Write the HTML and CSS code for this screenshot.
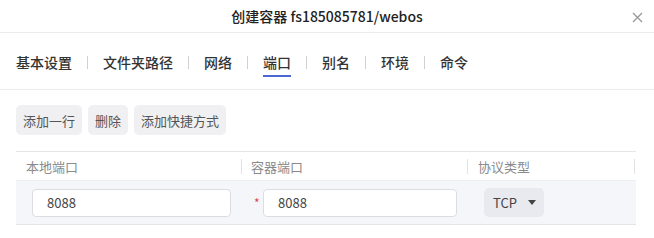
FILE: index.html
```html
<!DOCTYPE html>
<html lang="zh-CN">
<head>
    <meta charset="UTF-8">
    <title>创建容器</title>
    <link rel="stylesheet" href="styles.css">
</head>
<body>

<div class="dialog">
    <div class="dialog-header">
        <span></span>
        <h2 class="dialog-title">创建容器 fs185085781/webos</h2>
        <button class="close-btn" aria-label="关闭">
            <svg width="11" height="11" viewBox="0 0 11 11"><path d="M1 1L10 10M10 1L1 10" stroke="#9a9a9a" stroke-width="1.4" fill="none"/></svg>
        </button>
    </div>

    <div class="tabs">
        <span class="tab">基本设置</span>
        <span class="tab-sep"></span>
        <span class="tab">文件夹路径</span>
        <span class="tab-sep"></span>
        <span class="tab">网络</span>
        <span class="tab-sep"></span>
        <span class="tab active">端口</span>
        <span class="tab-sep"></span>
        <span class="tab">别名</span>
        <span class="tab-sep"></span>
        <span class="tab">环境</span>
        <span class="tab-sep"></span>
        <span class="tab">命令</span>
    </div>

    <div class="toolbar">
        <button class="btn">添加一行</button>
        <button class="btn">删除</button>
        <button class="btn">添加快捷方式</button>
    </div>

    <div class="port-table">
        <div class="table-head">
            <div class="th">本地端口</div>
            <div class="th">容器端口</div>
            <div class="th">协议类型</div>
        </div>
        <div class="table-row">
            <div class="td">
                <input class="field" type="text" value="8088">
            </div>
            <div class="td td-required">
                <span class="required">*</span>
                <input class="field" type="text" value="8088">
            </div>
            <div class="td">
                <div class="select">TCP <span class="caret"></span></div>
            </div>
        </div>
    </div>
</div>

</body>
</html>
```

FILE: styles.css
```css
body {
    margin: 0;
    font-family: "Noto Sans CJK SC", "Noto Sans", sans-serif;
    background: #fff;
    color: #333;
}
.dialog {
    width: 654px;
}
.dialog-header {
    display: grid;
    grid-template-columns: 1fr auto 1fr;
    align-items: center;
    height: 32px;
    border-bottom: 1px solid #ececec;
}
.dialog-title {
    margin: 0;
    font-size: 14px;
    font-weight: 500;
    color: #222;
    line-height: 30px;
}
.close-btn {
    justify-self: end;
    margin: 3px 11px 0 0;
    padding: 0;
    border: none;
    background: none;
    display: flex;
}
.tabs {
    display: flex;
    align-items: center;
    height: 57px;
    padding: 0 0 0 16px;
    border-bottom: 1px solid #ececec;
    box-sizing: border-box;
}
.tab {
    position: relative;
    font-size: 14px;
    font-weight: 500;
    color: #333;
    line-height: 20px;
    margin-top: 2px;
}
.tab.active::after {
    content: "";
    position: absolute;
    left: 0;
    right: 0;
    bottom: -5px;
    height: 2px;
    background: #4a68d0;
}
.tab-sep {
    width: 1px;
    height: 13px;
    background: #d0d0d0;
    margin: 2px 15px 0 15px;
}
.toolbar {
    display: flex;
    gap: 6px;
    padding: 15px 16px 0 16px;
}
.btn {
    height: 30px;
    padding: 0 7px;
    border: none;
    border-radius: 5px;
    background: #f0f0f2;
    font-family: inherit;
    font-size: 13px;
    color: #555;
}
.port-table {
    margin: 16px 18px 0 16px;
    border-top: 1px solid #e6e6e6;
}
.table-head, .table-row {
    display: grid;
    grid-template-columns: 226px 226px 167px;
}
.table-head {
    height: 28px;
    align-items: center;
}
.th {
    font-size: 13px;
    color: #8a8a8a;
    padding-left: 10px;
    border-right: 1px solid #e2e2e2;
    line-height: 15px;
    margin-top: 1px;
}
.th:first-child {
    border-right: none;
}
.th:nth-child(2) {
    border-left: 1px solid #e2e2e2;
    padding-left: 9px;
    margin-left: -1px;
}
.table-row {
    height: 43px;
    align-items: center;
    background: #f5f6f9;
    border-bottom: 1px solid #e3e4e8;
    border-top: 1px solid #eef0f3;
}
.td {
    display: flex;
    align-items: center;
    padding-left: 16px;
}
.td-required {
    padding-left: 12px;
    padding-right: 11px;
}
.required {
    color: #e0474c;
    font-size: 12px;
    width: 9px;
    margin-right: 0;
}
.field {
    width: 199px;
    height: 28px;
    box-sizing: border-box;
    border: 1px solid #dcdde2;
    border-radius: 4px;
    background: #fff;
    padding: 0 14px;
    font-family: inherit;
    font-size: 13px;
    color: #444;
    outline: none;
}
.td-required .field {
    width: 194px;
}
.select {
    display: flex;
    align-items: center;
    width: 60px;
    height: 29px;
    box-sizing: border-box;
    padding-left: 9px;
    border-radius: 5px;
    background: #e9eaf0;
    font-size: 13px;
    color: #444;
}
.caret {
    width: 0;
    height: 0;
    margin-left: 11px;
    border-left: 4px solid transparent;
    border-right: 4px solid transparent;
    border-top: 5px solid #444;
}
```
